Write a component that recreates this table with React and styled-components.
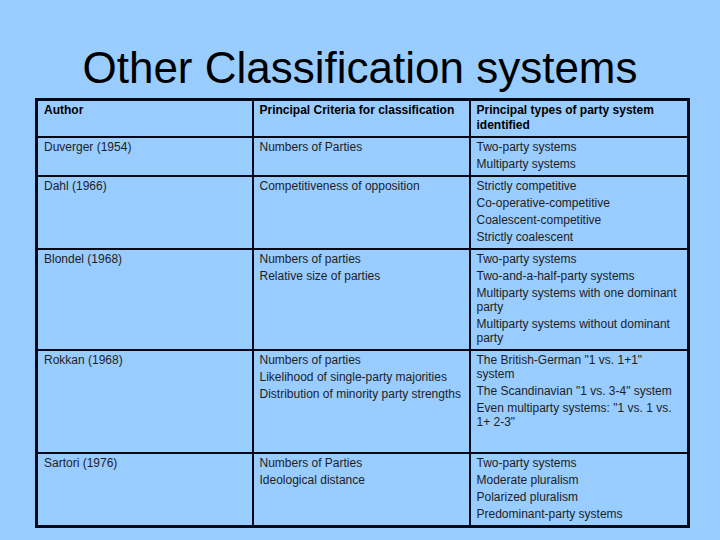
import React from "react";
import styled, { createGlobalStyle } from "styled-components";

const Global = createGlobalStyle`
  html, body { margin: 0; padding: 0; background: #99ccff; }
  body { font-family: "Liberation Sans", Arial, sans-serif; color: #000; }
`;

const Page = styled.div`
  width: 720px;
  height: 540px;
  background: #99ccff;
  overflow: hidden;
`;

const Title = styled.h1`
  margin: 0;
  padding-top: 43px;
  height: 50px;
  line-height: 50px;
  font-size: 44px;
  font-weight: normal;
  text-align: center;
  color: #000;
`;

const Table = styled.table`
  margin: 5px 0 0 35px;
  width: 652px;
  border-collapse: collapse;
  table-layout: fixed;
  border: 3px solid #060818;
  font-size: 12px;
  line-height: 14px;
  color: #1a1a1a;
`;

const Row = styled.tr`
  height: ${(p) => p.$h}px;
`;

const Cell = styled.td`
  border: 2px solid #060818;
  vertical-align: top;
  padding: 2px 6px 0 6px;
  font-weight: ${(p) => (p.$head ? "bold" : "normal")};
  line-height: ${(p) => (p.$head ? 15 : 14)}px;
  color: ${(p) => (p.$head ? "#000" : "#1e1e1e")};
`;

const Item = styled.div`
  margin-bottom: 3px;
`;

const rows = [
  { h: 39, a: "Duverger (1954)", c: ["Numbers of Parties"], t: ["Two-party systems", "Multiparty systems"] },
  { h: 73, a: "Dahl (1966)", c: ["Competitiveness of opposition"], t: ["Strictly competitive", "Co-operative-competitive", "Coalescent-competitive", "Strictly coalescent"] },
  { h: 101, a: "Blondel (1968)", c: ["Numbers of parties", "Relative size of parties"], t: ["Two-party systems", "Two-and-a-half-party systems", "Multiparty systems with one dominant party", "Multiparty systems without dominant party"] },
  { h: 103, a: "Rokkan (1968)", c: ["Numbers of parties", "Likelihood of single-party majorities", "Distribution of minority party strengths"], t: ['The British-German "1 vs. 1+1" system', 'The Scandinavian "1 vs. 3-4" system', 'Even multiparty systems: "1 vs. 1 vs. 1+ 2-3"'] },
  { h: 74, a: "Sartori (1976)", c: ["Numbers of Parties", "Ideological distance"], t: ["Two-party systems", "Moderate pluralism", "Polarized pluralism", "Predominant-party systems"] },
];

const List = ({ items }) => items.map((s, i) => <Item key={i}>{s}</Item>);

export default function App() {
  return (
    <Page>
      <Global />
      <Title>Other Classification systems</Title>
      <Table>
        <colgroup>
          <col style={{ width: "216px" }} />
          <col style={{ width: "217px" }} />
          <col style={{ width: "219px" }} />
        </colgroup>
        <tbody>
          <Row $h={37}>
            <Cell $head>Author</Cell>
            <Cell $head>Principal Criteria for classification</Cell>
            <Cell $head>Principal types of party system identified</Cell>
          </Row>
          {rows.map((r) => (
            <Row key={r.a} $h={r.h}>
              <Cell>{r.a}</Cell>
              <Cell><List items={r.c} /></Cell>
              <Cell><List items={r.t} /></Cell>
            </Row>
          ))}
        </tbody>
      </Table>
    </Page>
  );
}
